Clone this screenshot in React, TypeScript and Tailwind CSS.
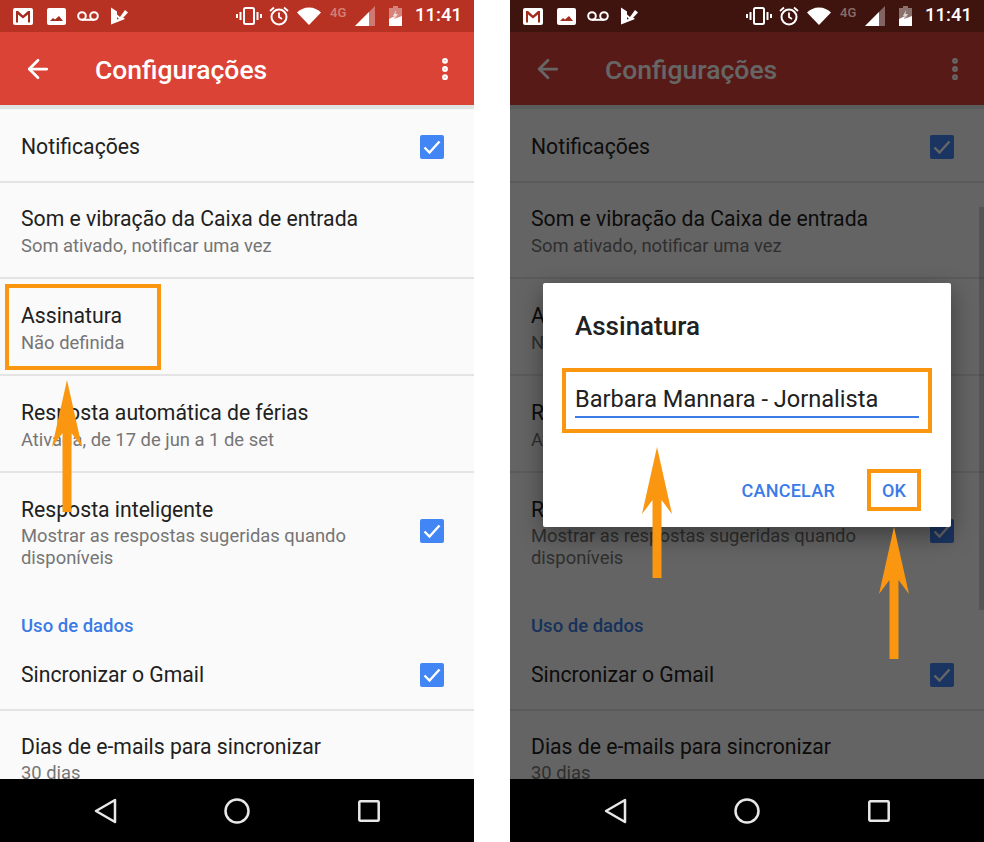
import { ArrowLeft, MoreVertical } from 'lucide-react';

const ORANGE = 'border-[#fa9610]';

function StatusIcons() {
  return (
    <>
      <div className="flex items-center">
        {/* gmail */}
        <svg width="20" height="17" viewBox="0 0 20 17" className="ml-[13px]">
          <rect width="20" height="17" rx="2" fill="#fff" />
          <path d="M3 14.500V3h2l5 4.500L15 3h2v11.500h-2V6.500l-5 4-5-4v8z" fill="#a32c1f" />
        </svg>
        {/* picture */}
        <svg width="19" height="17" viewBox="0 0 19 17" className="ml-[14px]">
          <rect width="19" height="17" rx="2" fill="#fff" />
          <path d="M3 13l3-3 2 1.500L12 8l4 5z" fill="#a32c1f" />
        </svg>
        {/* voicemail */}
        <svg width="22" height="10" viewBox="0 0 22 10" className="ml-[11px]" fill="none" stroke="#fff" strokeWidth="2">
          <circle cx="5" cy="5" r="3.800" />
          <circle cx="17" cy="5" r="3.800" />
          <path d="M5 8.800h12" />
        </svg>
        {/* inbox check */}
        <svg width="18" height="18" viewBox="0 0 18 18" className="ml-[12px]">
          <path d="M0 0.500L6 4.500V7.500L9 10L14 3L17 5.500L9.500 13.500L6 10V12.500L12 10.500L14 12L0 17.500z" fill="#fff" />
        </svg>
      </div>
      <div className="flex items-center">
        {/* vibrate */}
        <svg width="26" height="20" viewBox="0 0 26 20" fill="none" stroke="#fff">
          <rect x="8" y="2" width="10" height="16" rx="1.500" strokeWidth="2" />
          <path d="M4.500 6v8M21.500 6v8" strokeWidth="2" />
          <path d="M1 8v4M25 8v4" strokeWidth="2" />
        </svg>
        {/* alarm */}
        <svg width="20" height="20" viewBox="0 0 20 20" fill="none" stroke="#fff" strokeWidth="2" className="ml-[7px]">
          <circle cx="10" cy="11" r="7.500" />
          <path d="M10 6.500V11l3 2M1 5l4-3.500M19 5l-4-3.500" strokeWidth="1.800" />
        </svg>
        {/* wifi */}
        <svg width="24" height="18" viewBox="0 0 24 18" className="ml-[8px]">
          <path d="M0 5.500C3 2.500 7 0.500 12 0.500s9 2 12 5L12 18z" fill="#fff" />
        </svg>
        <div className="ml-[9px] mb-[6px] w-[23px] text-[13px] leading-[14px] font-medium text-white/40">4G</div>
        {/* signal */}
        <svg width="20" height="20" viewBox="0 0 20 20" className="ml-[2px]">
          <path d="M0 20L20 0v20z" fill="#fff" fillOpacity="0.35" />
          <path d="M0 20L14 6v14z" fill="#fff" />
        </svg>
        {/* battery */}
        <svg width="13" height="20" viewBox="0 0 13 20" className="ml-[14px]">
          <path d="M4 0h5v2h4v18H0V2h4z" fill="#fff" fillOpacity="0.4" />
          <path d="M0 13l6-3-1 3 8-3v10H0z" fill="#fff" />
          <path d="M7 4L4 10h2.500L5 14l4-6H6.500z" fill="#fff" fillOpacity="0.7" />
        </svg>
        <div className="ml-[13px] mr-[12px] text-[18.500px] font-medium text-white">11:41</div>
      </div>
    </>
  );
}

function Check() {
  return (
    <svg width="24" height="24" viewBox="0 0 24 24" className="mr-[30px] shrink-0">
      <rect width="24" height="24" rx="2" fill="#4285f4" />
      <path d="M4.500 12.500l5 5 10-11" fill="none" stroke="#fff" strokeWidth="2.400" />
    </svg>
  );
}

function Row({ title, sub, check, cls }: { title: string; sub?: string; check?: boolean; cls: string }) {
  return (
    <div className={`flex items-center justify-between border-b-2 border-[#e4e4e4] pl-[21px] ${cls}`}>
      <div className="min-w-0">
        <div className="text-[21.200px] leading-[28px] text-[#212121]">{title}</div>
        {sub && <div className="text-[18.400px] leading-[26px] text-[#757575]">{sub}</div>}
      </div>
      {check && <Check />}
    </div>
  );
}

function List() {
  return (
    <div className="h-full bg-[#fafafa]">
      <Row title="Notificações" check cls="h-[78px] pt-[8px]" />
      <Row title="Som e vibração da Caixa de entrada" sub="Som ativado, notificar uma vez" cls="h-[96px] pt-[4px]" />
      <Row title="Assinatura" sub="Não definida" cls="h-[97px] pt-[4px]" />
      <Row title="Resposta automática de férias" sub="Ativada, de 17 de jun a 1 de set" cls="h-[97px] pt-[4px]" />
      <div className="flex h-[131px] items-start justify-between pl-[21px] pt-[23px]">
        <div className="w-[360px]">
          <div className="text-[21.200px] leading-[28px] text-[#212121]">Resposta inteligente</div>
          <div className="mt-[1px] text-[18.400px] leading-[21.500px] text-[#757575]">Mostrar as respostas sugeridas quando disponíveis</div>
        </div>
        <div className="mt-[23px]">
          <Check />
        </div>
      </div>
      <div className="flex h-[42px] items-center pl-[21px] pt-[4px] text-[18.500px] font-medium text-[#3b7be8]">Uso de dados</div>
      <Row title="Sincronizar o Gmail" check cls="h-[65px] pb-[6px]" />
      <div className="pl-[21px] pt-[22px]">
        <div className="text-[21.200px] leading-[28px] text-[#212121]">Dias de e-mails para sincronizar</div>
        <div className="text-[18.400px] leading-[24px] text-[#757575]">30 dias</div>
      </div>
    </div>
  );
}

function Arrow({ tipX, tipY, endY }: { tipX: number; tipY: number; endY: number }) {
  const h = endY - tipY;
  return (
    <svg
      width="32"
      height={h}
      viewBox={`0 0 32 ${h}`}
      className="pointer-events-none absolute"
      style={{ left: tipX - 16, top: tipY }}
    >
      <path d={`M16 0L31 67L20.500 53V${h}H11.500V53L1 67Z`} fill="#fa9610" />
    </svg>
  );
}

function Phone({ dim, children }: { dim?: boolean; children?: React.ReactNode }) {
  return (
    <div className="relative flex h-[842px] w-[474px] shrink-0 flex-col overflow-hidden font-['Roboto',sans-serif]">
      <div className={`flex h-[32px] shrink-0 items-center justify-between ${dim ? 'bg-[#3f130e]' : 'bg-[#b83224]'}`}>
        <StatusIcons />
      </div>
      <div className="relative min-h-0 flex-1 overflow-hidden">
        <div className="relative z-10 flex h-[73px] items-center bg-[#dc4337] shadow-[0_4px_1px_#e0e3e3]">
          <ArrowLeft size={30} strokeWidth={2.200} color="#fff" className="ml-[23px]" />
          <div className="ml-[42px] mt-[3px] flex-1 text-[26.500px] font-medium text-white">Configurações</div>
          <MoreVertical size={28} strokeWidth={3} color="#fff" className="mr-[15px]" />
        </div>
        <List />
        {dim && <div className="absolute inset-0 z-20 bg-black/60" />}
        {dim && <div className="absolute right-0 top-[175px] z-20 h-[403px] w-[5px] bg-black/15" />}
      </div>
      <div className="h-[63px] shrink-0 bg-black">
        <div className="flex h-full items-center">
          <svg width="24" height="26" viewBox="0 0 24 26" className="ml-[94px]" fill="none" stroke="#e8e8e8" strokeWidth="2.500" strokeLinejoin="round">
            <path d="M21 2v22L2 13z" />
          </svg>
          <svg width="26" height="26" viewBox="0 0 26 26" className="ml-[106px]" fill="none" stroke="#e8e8e8" strokeWidth="2.500">
            <circle cx="13" cy="13" r="11.500" />
          </svg>
          <svg width="22" height="22" viewBox="0 0 22 22" className="ml-[108px]" fill="none" stroke="#e8e8e8" strokeWidth="2.500">
            <rect x="1.300" y="1.300" width="19.400" height="19.400" rx="1" />
          </svg>
        </div>
      </div>
      {children}
    </div>
  );
}

export default function App() {
  return (
    <div className="flex h-[842px] w-[984px] justify-between overflow-hidden bg-white">
      <Phone>
        <div className={`absolute left-[5px] top-[284px] z-30 h-[86px] w-[156px] border-[4px] ${ORANGE}`} />
        <Arrow tipX={67} tipY={380} endY={512} />
      </Phone>
      <Phone dim>
        {/* dialog */}
        <div className="absolute left-[33px] top-[283px] z-30 flex h-[244px] w-[408px] flex-col rounded-[2px] bg-white shadow-[0_8px_24px_rgba(0,0,0,0.4)]">
          <div className="pl-[32px] pt-[25px] text-[26px] font-medium leading-[36px] text-[#212121]">Assinatura</div>
          <div className={`mx-[19px] mt-[24px] h-[65px] border-[4px] px-[9px] pt-[11px] ${ORANGE}`}>
            <div className="border-b-2 border-[#3b7be8] text-[23.600px] leading-[33px] text-[#212121]">Barbara Mannara - Jornalista</div>
          </div>
          <div className="mt-[36px] flex items-center justify-end pr-[30px]">
            <div className="text-[18px] font-medium tracking-[0.25px] text-[#3b7be8]">CANCELAR</div>
            <div className={`ml-[32px] flex h-[42px] w-[54px] items-center justify-center border-[4px] text-[18px] font-medium text-[#3b7be8] ${ORANGE}`}>OK</div>
          </div>
        </div>
        <div className="absolute inset-0 z-40">
          <Arrow tipX={147} tipY={447} endY={578} />
          <Arrow tipX={384} tipY={527} endY={659} />
        </div>
      </Phone>
    </div>
  );
}
